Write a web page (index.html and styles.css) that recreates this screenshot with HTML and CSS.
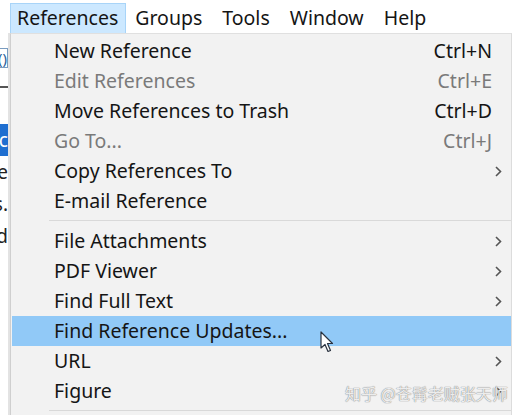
FILE: index.html
```html
<!DOCTYPE html>
<html>
<head>
<meta charset="utf-8">
<link rel="stylesheet" href="styles.css">
</head>
<body>
<div class="menubar">
  <span class="mb-item active">References</span>
  <span class="mb-item">Groups</span>
  <span class="mb-item">Tools</span>
  <span class="mb-item">Window</span>
  <span class="mb-item">Help</span>
</div>
<div class="main">
  <div class="side">
    <div class="side-gap1"></div>
    <div class="side-search"><span>()</span></div>
    <div class="side-line"></div>
    <div class="side-white"></div>
    <div class="side-sel"><span>Yac</span></div>
    <div class="side-txt"><span>Re</span></div>
    <div class="side-txt"><span>s.</span></div>
    <div class="side-txt"><span>nd</span></div>
  </div>
  <div class="menu">
    <div class="row"><span class="label">New Reference</span><span class="key">Ctrl+N</span></div>
    <div class="row disabled"><span class="label">Edit References</span><span class="key">Ctrl+E</span></div>
    <div class="row"><span class="label">Move References to Trash</span><span class="key">Ctrl+D</span></div>
    <div class="row disabled"><span class="label">Go To...</span><span class="key">Ctrl+J</span></div>
    <div class="row"><span class="label">Copy References To</span><svg class="chev" width="7" height="11" viewBox="0 0 7 11"><path d="M1 1 L5.5 5.5 L1 10" fill="none" stroke="#555" stroke-width="1.6"/></svg></div>
    <div class="row"><span class="label">E-mail Reference</span></div>
    <div class="sep"></div>
    <div class="row"><span class="label">File Attachments</span><svg class="chev" width="7" height="11" viewBox="0 0 7 11"><path d="M1 1 L5.5 5.5 L1 10" fill="none" stroke="#555" stroke-width="1.6"/></svg></div>
    <div class="row"><span class="label">PDF Viewer</span><svg class="chev" width="7" height="11" viewBox="0 0 7 11"><path d="M1 1 L5.5 5.5 L1 10" fill="none" stroke="#555" stroke-width="1.6"/></svg></div>
    <div class="row"><span class="label">Find Full Text</span><svg class="chev" width="7" height="11" viewBox="0 0 7 11"><path d="M1 1 L5.5 5.5 L1 10" fill="none" stroke="#555" stroke-width="1.6"/></svg></div>
    <div class="row hover"><span class="label">Find Reference Updates...</span></div>
    <div class="row"><span class="label">URL</span><svg class="chev" width="7" height="11" viewBox="0 0 7 11"><path d="M1 1 L5.5 5.5 L1 10" fill="none" stroke="#555" stroke-width="1.6"/></svg></div>
    <div class="row"><span class="label">Figure</span><svg class="chev" width="7" height="11" viewBox="0 0 7 11"><path d="M1 1 L5.5 5.5 L1 10" fill="none" stroke="#555" stroke-width="1.6"/></svg></div>
    <div class="sep"></div>
    <svg class="cursor" width="16" height="24" viewBox="0 0 16 24"><path d="M1 1 L1 17 L5 13.5 L8 20.5 L10.5 19.5 L7.5 12.5 L12.5 12.5 Z" fill="#fff" stroke="#2a3340" stroke-width="1.2" stroke-linejoin="round"/></svg>
    <div class="watermark">知乎 @苍髯老贼张天师</div>
  </div>
</div>
</body>
</html>
```
FILE: styles.css
```css
html, body {
  margin: 0;
  padding: 0;
  width: 514px;
  height: 415px;
  overflow: hidden;
  background: #ffffff;
  font-family: "Noto Sans", "Noto Sans CJK SC", sans-serif;
  font-size: 19.5px;
  color: #151515;
}

.menubar {
  height: 33px;
  display: flex;
  align-items: stretch;
  padding-left: 10px;
  background: #ffffff;
  box-sizing: border-box;
  padding-top: 3px;
}

.mb-item {
  display: flex;
  align-items: center;
  padding: 0 10px 1px 8px;
  border: 1px solid transparent;
  border-bottom: none;
  line-height: 1;
}

.mb-item.active {
  padding: 0 7px 1px 6px;
  background: #cce8ff;
  border-color: #a8d4f8;
}

.main {
  display: flex;
  height: 382px;
}

.side {
  width: 10px;
  overflow: hidden;
  display: flex;
  flex-direction: column;
  background: #fff;
  border-right: 2px solid #e3e3e3;
  box-sizing: border-box;
  flex: none;
}

.side > div {
  width: 40px;
  margin-left: -32px;
  display: flex;
  justify-content: flex-end;
  flex: none;
}

.side-gap1 { height: 15px; }

.side-search {
  height: 20px;
  border: 1px solid #7a9cc0;
  box-sizing: border-box;
  align-items: center;
  font-size: 15px;
  color: #2a5f9a;
}

.side-line {
  height: 2px;
  background: #555;
  margin-top: 18px;
}

.side-white { height: 36px; }

.side-sel {
  height: 32px;
  background: #1f6fd0;
  color: #fff;
  align-items: center;
  font-size: 19px;
}

.side-txt {
  height: 32px;
  align-items: center;
  font-size: 19px;
  color: #222;
}

.menu {
  position: relative;
  flex: 1;
  margin-right: 2px;
  background: #f2f2f2;
  border-left: 1px solid #cfcfcf;
  border-top: 1px solid #e0e0e0;
  border-right: 1px solid #dcdcdc;
  padding: 2px 0 0 1px;
}

.row {
  height: 30px;
  display: flex;
  align-items: center;
  padding-left: 42px;
  padding-right: 8px;
  line-height: 1;
}

.row .label {
  flex: 1;
}

.row .key {
  margin-right: 11px;
}

.row.disabled {
  color: #7a7a7a;
}

.row.hover {
  background: #91c9f7;
}

.chev {
  margin-right: 1px;
}

.sep {
  height: 1px;
  background: #d9d9d9;
  margin: 4px 0 5px 37px;
}

.cursor {
  position: absolute;
  left: 309px;
  top: 297px;
}

.watermark {
  position: absolute;
  left: 334px;
  top: 347px;
  white-space: nowrap;
  font-family: "Noto Sans CJK SC", sans-serif;
  font-size: 16px;
  color: rgba(255, 255, 255, 0.85);
  text-shadow: 0 0 1px #8a8a8a, 0 0 1px #8a8a8a;
}
```
